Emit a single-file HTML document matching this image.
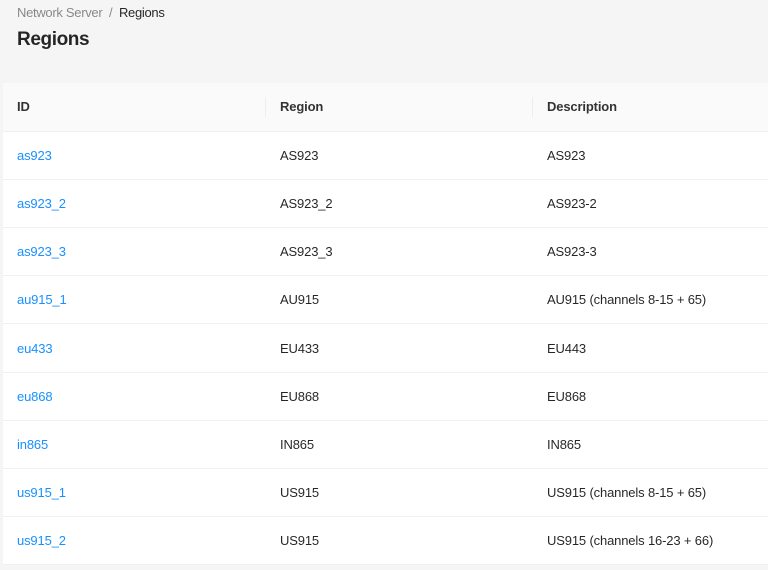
<!DOCTYPE html>
<html><head><style>
body{margin:0;width:768px;height:570px;background:#f5f5f5;font-family:"Liberation Sans",sans-serif;font-size:13px;color:rgba(0,0,0,.85);overflow:hidden;position:relative}
.bc{position:absolute;left:17px;top:5px;font-size:13px;letter-spacing:-0.3px;color:rgba(0,0,0,.45)}
.bc b{font-weight:normal;color:rgba(0,0,0,.85)}
h1{position:absolute;left:17px;top:29px;margin:0;font-size:19px;font-weight:600;letter-spacing:-0.4px;color:rgba(0,0,0,.85)}
.card{position:absolute;left:3px;top:83px;width:765px;height:482px;background:#fff;border-radius:2px 0 0 0}
table{border-collapse:collapse;width:765px;letter-spacing:-0.15px}
td,th{height:48.2px;padding:0 0 0 14px;text-align:left;border-bottom:1px solid #f0f0f0;box-sizing:border-box}
th{background:#fafafa;font-weight:600;position:relative;color:rgba(0,0,0,.8)}
th.s:before{content:"";position:absolute;left:0;top:14px;height:20px;width:1px;background:#eee}
td:nth-child(2),th:nth-child(2){padding-left:15px}
td:nth-child(3),th:nth-child(3){padding-left:15px}
a{color:#1890ff;text-decoration:none}
</style></head><body>
<div class="bc">Network Server &nbsp;/&nbsp; <b>Regions</b></div>
<h1>Regions</h1>
<div class="card"><table>
<colgroup><col style="width:262px"><col style="width:267px"><col></colgroup>
<tr><th>ID</th><th class="s">Region</th><th class="s">Description</th></tr>
<tr><td><a>as923</a></td><td>AS923</td><td>AS923</td></tr>
<tr><td><a>as923_2</a></td><td>AS923_2</td><td>AS923-2</td></tr>
<tr><td><a>as923_3</a></td><td>AS923_3</td><td>AS923-3</td></tr>
<tr><td><a>au915_1</a></td><td>AU915</td><td>AU915 (channels 8-15 + 65)</td></tr>
<tr><td><a>eu433</a></td><td>EU433</td><td>EU443</td></tr>
<tr><td><a>eu868</a></td><td>EU868</td><td>EU868</td></tr>
<tr><td><a>in865</a></td><td>IN865</td><td>IN865</td></tr>
<tr><td><a>us915_1</a></td><td>US915</td><td>US915 (channels 8-15 + 65)</td></tr>
<tr><td><a>us915_2</a></td><td>US915</td><td>US915 (channels 16-23 + 66)</td></tr>
</table></div>
</body></html>
